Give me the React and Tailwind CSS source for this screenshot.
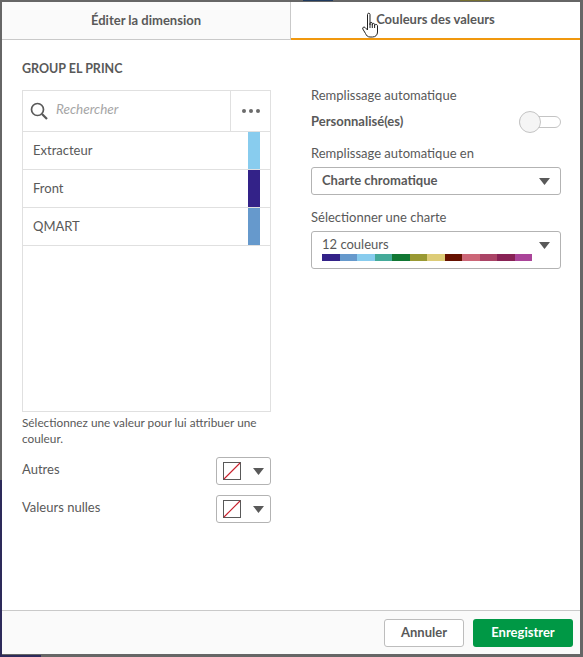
import React from "react";

const palette = ["#332288","#6699cc","#88ccee","#44aa99","#117733","#999933","#ddcc77","#661100","#cc6677","#aa4466","#882255","#aa4499"];

function Caret({ className = "" }) {
  return (
    <svg width="11" height="7" viewBox="0 0 11 7" className={className}>
      <path d="M0 0H11L5.5 7Z" fill="#595959" />
    </svg>
  );
}

function NoColor() {
  return (
    <svg width="18" height="18" viewBox="0 0 18 18">
      <rect x="0.5" y="0.5" width="17" height="17" fill="#fff" stroke="#595959" />
      <path d="M1 17L17 1" stroke="#c8202c" strokeWidth="1.1" />
    </svg>
  );
}

function ColorPick() {
  return (
    <div className="w-[55px] h-[28px] border border-[#b3b3b3] rounded-[3px] flex items-center pl-[6px] gap-[12px] bg-white">
      <NoColor />
      <Caret />
    </div>
  );
}

function Row({ label, color }) {
  return (
    <div className="h-[38px] border-b border-[#e0e0e0] flex items-stretch justify-between">
      <span className="pl-[10px] leading-[36px]">{label}</span>
      <span className="w-[12px] mr-[10px]" style={{ background: color }} />
    </div>
  );
}

export default function App() {
  return (
    <div
      className="relative w-[583px] h-[657px] bg-[#666666] pt-[2px] pl-[2px] text-[13px] text-[#595959]"
      style={{ fontFamily: "Lato, 'Open Sans', sans-serif" }}
    >
      <span className="absolute left-0 top-[480px] w-[2px] h-[177px] bg-[#2d2a5a]" />
      <span className="absolute left-0 bottom-0 w-[41px] h-[2px] bg-[#2d2a5a]" />
      <span className="absolute left-[303px] top-0 w-[30px] h-[1px] bg-[#1f3a5f]" />
      <span className="absolute left-[460px] top-0 w-[30px] h-[1px] bg-[#77702f]" />

      <div className="w-[578px] h-[652px] bg-white flex flex-col relative overflow-hidden">
        <div className="flex h-[38px] shrink-0 font-bold">
          <div className="w-[289px] bg-[#fafafa] border-b border-r border-[#c9c9c9] flex items-center justify-center">Éditer la dimension</div>
          <div className="flex-1 bg-white border-b-2 border-[#f0980e] flex items-center justify-center">Couleurs des valeurs</div>
        </div>

        <div className="flex-1 flex pl-[20px] pr-[19px]">
          <div className="w-[249px] shrink-0 flex flex-col">
            <div className="font-bold text-[12.5px] mt-[21px] h-[16px] leading-[16px]">GROUP EL PRINC</div>
            <div className="mt-[13px] w-[249px] h-[322px] border border-[#e0e0e0] flex flex-col">
              <div className="h-[41px] flex border-b border-[#e0e0e0] shrink-0">
                <div className="flex-1 flex items-center pl-[7px] gap-[8px]">
                  <svg width="18" height="18" viewBox="0 0 18 18" fill="none" stroke="#595959">
                    <circle cx="7.5" cy="7.5" r="6" strokeWidth="1.7" />
                    <path d="M12 12L17 17" strokeWidth="2.2" />
                  </svg>
                  <span className="italic text-[#a6a6a6] text-[13.5px] pb-[3px]">Rechercher</span>
                </div>
                <div className="w-[40px] border-l border-[#e0e0e0] flex items-center justify-center gap-[3px]">
                  <i className="w-[4px] h-[4px] rounded-full bg-[#6b6b6b]" />
                  <i className="w-[4px] h-[4px] rounded-full bg-[#6b6b6b]" />
                  <i className="w-[4px] h-[4px] rounded-full bg-[#6b6b6b]" />
                </div>
              </div>
              <Row label="Extracteur" color="#88ccee" />
              <Row label="Front" color="#332288" />
              <Row label="QMART" color="#6699cc" />
            </div>
            <p className="mt-[3px] text-[11.8px] leading-[16px]">Sélectionnez une valeur pour lui attribuer une couleur.</p>
            <div className="mt-[10px] flex items-center justify-between h-[28px]"><span className="-mt-[3px]">Autres</span><ColorPick /></div>
            <div className="mt-[10px] flex items-center justify-between h-[28px]"><span className="-mt-[3px]">Valeurs nulles</span><ColorPick /></div>
          </div>

          <div className="ml-[40px] w-[250px] flex flex-col">
            <div className="mt-[47px] h-[16px] leading-[16px]">Remplissage automatique</div>
            <div className="mt-[7px] h-[24px] flex items-center justify-between">
              <span className="font-bold">Personnalisé(es)</span>
              <div className="relative w-[42px] h-[12px] border border-[#c4c4c4] rounded-full">
                <div className="absolute -left-[1px] -top-[6px] w-[22px] h-[22px] rounded-full border border-[#c4c4c4] bg-[#f5f5f5]" />
              </div>
            </div>
            <div className="mt-[11px] h-[16px] leading-[16px]">Remplissage automatique en</div>
            <div className="mt-[6px] h-[28px] border border-[#b3b3b3] rounded-[3px] flex items-center justify-between px-[10px] font-bold">
              <span>Charte chromatique</span>
              <Caret />
            </div>
            <div className="mt-[14px] h-[16px] leading-[16px]">Sélectionner une charte</div>
            <div className="mt-[6px] h-[38px] border border-[#b3b3b3] rounded-[3px] relative pl-[10px] pr-[10px] pt-[5px]">
              <div className="flex justify-between items-center h-[16px]">
                <span>12 couleurs</span>
                <Caret />
              </div>
              <div className="flex h-[7px] mt-[1px] w-[210px]">
                {palette.map((c) => (
                  <span key={c} className="flex-1" style={{ background: c }} />
                ))}
              </div>
            </div>
          </div>
        </div>

        <div className="h-[44px] shrink-0 bg-[#fafafa] border-t border-[#c9c9c9] flex items-center justify-end gap-[9px] pr-[7px] font-bold">
          <div className="w-[80px] h-[28px] border border-[#bdbdbd] rounded-[3px] bg-white flex items-center justify-center">Annuler</div>
          <div className="w-[100px] h-[28px] rounded-[3px] bg-[#009845] text-white flex items-center justify-center">Enregistrer</div>
        </div>

        <svg className="absolute left-[360px] top-[10px]" width="18" height="26" viewBox="0 0 18 26" fill="#fff" stroke="#222" strokeWidth="1" strokeLinejoin="round">
          <path d="M5.5 2.5C5.5 .8 8 .8 8 2.5V13V11.5C8 10 10.3 10 10.3 11.5V13.5V12.5C10.3 11 12.6 11 12.6 12.5V14V13.5C12.6 12 15.5 12 15.5 13.8V20C15.5 23 13.5 25 10.5 25H8C5.5 25 4.5 23.5 3.5 21.5L.8 17C.2 15.6 1.8 14.4 3 15.4L5.5 18Z" />
          <path d="M8 13V16M10.3 13.5V16M12.6 14V16" fill="none" />
        </svg>
      </div>
    </div>
  );
}
